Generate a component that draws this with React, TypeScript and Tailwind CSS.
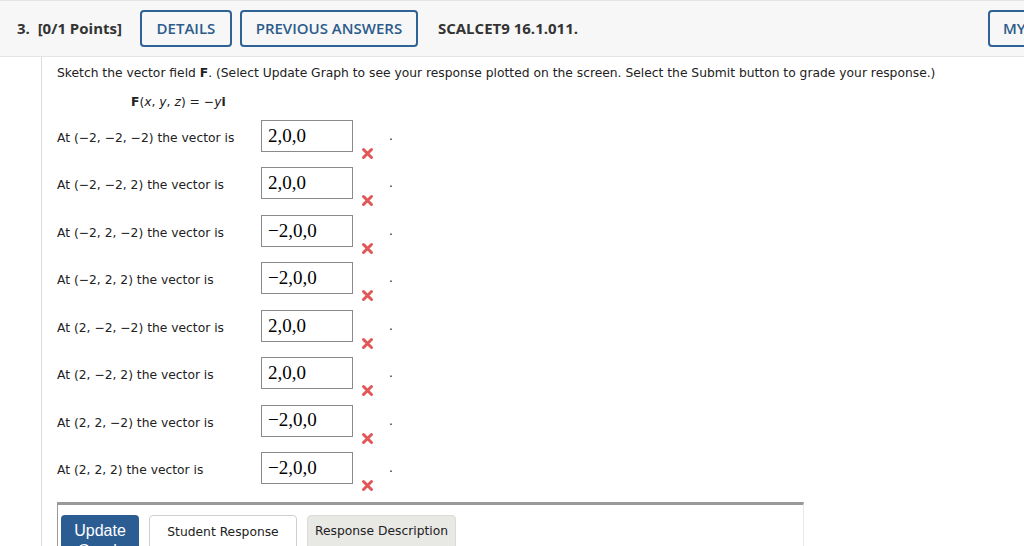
import type { ReactNode } from 'react'

type Row = {
  point: string
  answer: string
}

const rows: Row[] = [
  { point: '(−2, −2, −2)', answer: '2,0,0' },
  { point: '(−2, −2, 2)', answer: '2,0,0' },
  { point: '(−2, 2, −2)', answer: '−2,0,0' },
  { point: '(−2, 2, 2)', answer: '−2,0,0' },
  { point: '(2, −2, −2)', answer: '2,0,0' },
  { point: '(2, −2, 2)', answer: '2,0,0' },
  { point: '(2, 2, −2)', answer: '−2,0,0' },
  { point: '(2, 2, 2)', answer: '−2,0,0' },
]

function OutlineButton({ children, className = '' }: { children: ReactNode; className?: string }) {
  return (
    <div
      className={`flex h-[37px] shrink-0 items-center justify-center rounded-[4px] border-2 border-[#2f6295] text-[15px] font-semibold text-[#2c5b8c] ${className}`}
    >
      {children}
    </div>
  )
}

function WrongMark() {
  return (
    <svg width="13" height="13" viewBox="0 0 13 13" className="mt-[27px] ml-[8px]">
      <path d="M2.5 2.5 L10.5 10.5 M10.5 2.5 L2.5 10.5" stroke="#e25656" strokeWidth="3" strokeLinecap="round" />
    </svg>
  )
}

export default function App() {
  return (
    <div className="h-[546px] w-[1024px] overflow-hidden bg-white">
      <header
        className="flex h-[57px] items-center border-y border-[#e4e4e4] bg-[#f7f7f7] pl-[17px] text-[#333]"
        style={{ fontFamily: '"Open Sans", sans-serif' }}
      >
        <span className="text-[15px] font-bold whitespace-pre">3.  [0/1 Points]</span>
        <OutlineButton className="ml-[18px] w-[92px]">DETAILS</OutlineButton>
        <OutlineButton className="ml-[8px] w-[178px]">PREVIOUS ANSWERS</OutlineButton>
        <span className="ml-[20px] text-[15px] font-bold">SCALCET9 16.1.011.</span>
        <OutlineButton className="ml-auto -mr-[24px] w-[60px] justify-start pl-[13px]">MY</OutlineButton>
      </header>

      <main
        className="ml-[41px] border-l border-[#dcdcdc] pl-[15px] pt-[7px] text-[12.3px] text-[#222]"
        style={{ fontFamily: '"DejaVu Sans", Verdana, sans-serif' }}
      >
        <p className="leading-[18px]">
          Sketch the vector field <b>F</b>. (Select Update Graph to see your response plotted on the screen. Select the
          Submit button to grade your response.)
        </p>
        <p className="mt-[11px] ml-[74px] leading-[18px]">
          <b>F</b>(<i>x</i>, <i>y</i>, <i>z</i>) = −<i>y</i>
          <b>i</b>
        </p>

        <div className="mt-[9px] flex flex-col">
          {rows.map((row, i) => (
            <div key={i} className="flex h-[47.45px] items-start">
              <span className="mt-[9px] w-[204px] leading-[18px]">At {row.point} the vector is</span>
              <div
                className="flex h-[32px] w-[92px] items-center border border-[#8a8a8a] pl-[6px] text-[19px] text-black"
                style={{ fontFamily: '"Liberation Serif", "DejaVu Serif", serif' }}
              >
                {row.answer}
              </div>
              <WrongMark />
              <span className="mt-[7px] ml-[15px]">.</span>
            </div>
          ))}
        </div>

        <div className="mt-[2px] w-[747px] border-t-[3px] border-l border-r border-[#999] border-r-[#e8e8e8] pt-[10px] pl-[3px]">
          <div className="flex items-start gap-[10px]">
            <div
              className="h-[40px] w-[78px] rounded-t-[4px] bg-[#2c5d92] pt-[6px] text-center text-[16px] leading-[20px] text-white"
              style={{ fontFamily: '"Liberation Sans", Arial, sans-serif' }}
            >
              Update
              <br />
              Graph
            </div>
            <div className="flex h-[40px] w-[148px] items-start justify-center rounded-t-[4px] border border-[#cfcfcf] bg-white pt-[7px]">
              Student Response
            </div>
            <div className="flex h-[40px] w-[149px] items-start justify-center rounded-t-[4px] border border-[#dcdcd6] bg-[#e8e8e4] pt-[6px]">
              Response Description
            </div>
          </div>
        </div>
      </main>
    </div>
  )
}
